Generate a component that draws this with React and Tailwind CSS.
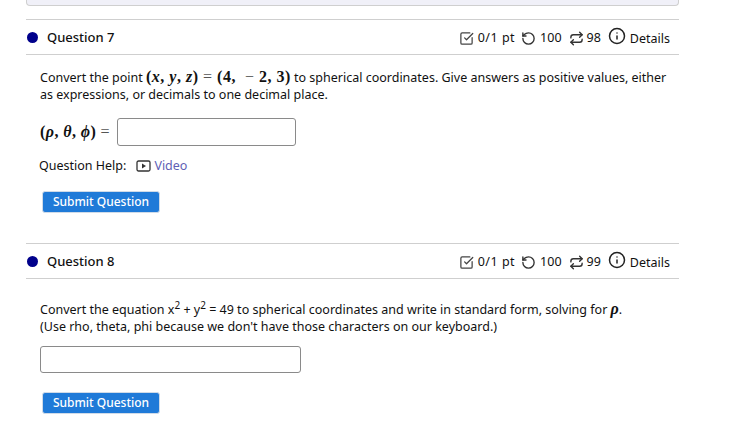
import { CheckSquare, RotateCcw, Repeat, Info } from "lucide-react";

const sans = "font-['Noto_Sans','DejaVu_Sans',sans-serif]";
const math = "font-['Liberation_Serif',serif]";

function VideoIcon() {
  return (
    <svg width="15" height="12" viewBox="0 0 15 12" className="ml-[10px] text-[#333]">
      <rect x="1" y="1" width="13" height="10" rx="1.5" fill="none" stroke="currentColor" strokeWidth="1.3" />
      <path d="M6 3.5 L10 6 L6 8.5 Z" fill="currentColor" />
    </svg>
  );
}

function Meta({ retries }) {
  return (
    <div className="flex items-center text-[12.5px] text-[#111]">
      <CheckSquare size={15} strokeWidth={2} className="text-[#444] mr-[4px] mt-[2px]" />
      <span className="tracking-[0.5px] mt-[3px]">0/1 pt</span>
      <RotateCcw size={15} strokeWidth={2.2} className="text-[#333] ml-[6px] mr-[4px] mt-[2px]" />
      <span className="mt-[3px]">100</span>
      <Repeat size={15} strokeWidth={2.2} className="text-[#333] ml-[7px] mr-[3px] mt-[2px]" />
      <span className="mt-[3px]">{retries}</span>
      <Info size={18} strokeWidth={2} className="text-[#222] ml-[7px] mr-[4px] -mt-[3px]" />
      <span className="mt-[4px]">Details</span>
    </div>
  );
}

function Header({ title, retries }) {
  return (
    <div className="h-[36px] border-y border-[#cfcfcf] flex items-center justify-between pl-[1px] pr-[9px]">
      <div className="flex items-center">
        <span className="w-[11px] h-[11px] rounded-full bg-[#00008b]" />
        <span className="ml-[9px] mt-[2px] text-[13px] text-[#111] font-medium">{title}</span>
      </div>
      <Meta retries={retries} />
    </div>
  );
}

function SubmitButton() {
  return (
    <button className="w-[118px] h-[22px] rounded-[3px] bg-[#1f7ad8] border border-[#d0dbe8] text-white text-[12px] leading-none font-medium">
      Submit Question
    </button>
  );
}

export default function App() {
  return (
    <div className={`w-[733px] h-[440px] overflow-hidden bg-white pl-[26px] ${sans}`}>
      <div className="w-[653px]">
        <div className="h-[6px] bg-[#f0f0f8] border border-t-0 border-[#cfcfcf] rounded-b-[4px]" />

        <div className="mt-[13px]">
          <Header title="Question 7" retries="98" />
          <div className="pl-[14px] pt-[14px] text-[#111]">
            <p className="text-[12.5px] leading-[17px] w-[640px]">
              Convert the point{" "}
              <span className={`${math} text-[16px] leading-none font-bold tracking-[0.5px] whitespace-pre`}>
                (<i>x</i>, <i>y</i>, <i>z</i>) <span className="font-normal text-[#555]">=</span> (4,  <span className="font-normal text-[#555]">−</span> 2, 3)
              </span>{" "}
              to spherical coordinates. Give answers as positive values, either as expressions, or decimals to one decimal place.
            </p>
            <div className="flex items-center mt-[15px]">
              <span className={`${math} text-[16px] font-bold tracking-[0.4px] whitespace-pre mr-[7px]`}>
                (<i>ρ</i>, <i>θ</i>, <i>ϕ</i>) <span className="font-normal text-[#555]">=</span>
              </span>
              <input className="w-[179px] h-[28px] rounded-[3px] border border-[#8a8a8a] bg-white" />
            </div>
            <div className="flex items-center mt-[11px] text-[12.5px] leading-[18px]">
              <span className="-ml-[1px]">Question Help:</span>
              <VideoIcon />
              <span className="ml-[3px] text-[#5f5fb5]">Video</span>
            </div>
            <div className="mt-[13px] pl-[2px]">
              <SubmitButton />
            </div>
          </div>
        </div>

        <div className="mt-[30px]">
          <Header title="Question 8" retries="99" />
          <div className="pl-[14px] pt-[22px] text-[#111]">
            <p className="text-[12.5px] leading-[17px]">
              Convert the equation x<sup className="text-[10px]">2</sup> + y<sup className="text-[10px]">2</sup> = 49 to spherical coordinates and write in standard form, solving for{" "}
              <i className={`${math} text-[16px] leading-none font-bold`}>ρ</i>.
            </p>
            <p className="text-[12.5px] leading-[17px]">
              (Use rho, theta, phi because we don't have those characters on our keyboard.)
            </p>
            <input className="block w-[261px] h-[27px] mt-[11px] rounded-[3px] border border-[#8a8a8a] bg-white" />
            <div className="mt-[16px] pl-[2px]">
              <SubmitButton />
            </div>
          </div>
        </div>
      </div>
    </div>
  );
}
